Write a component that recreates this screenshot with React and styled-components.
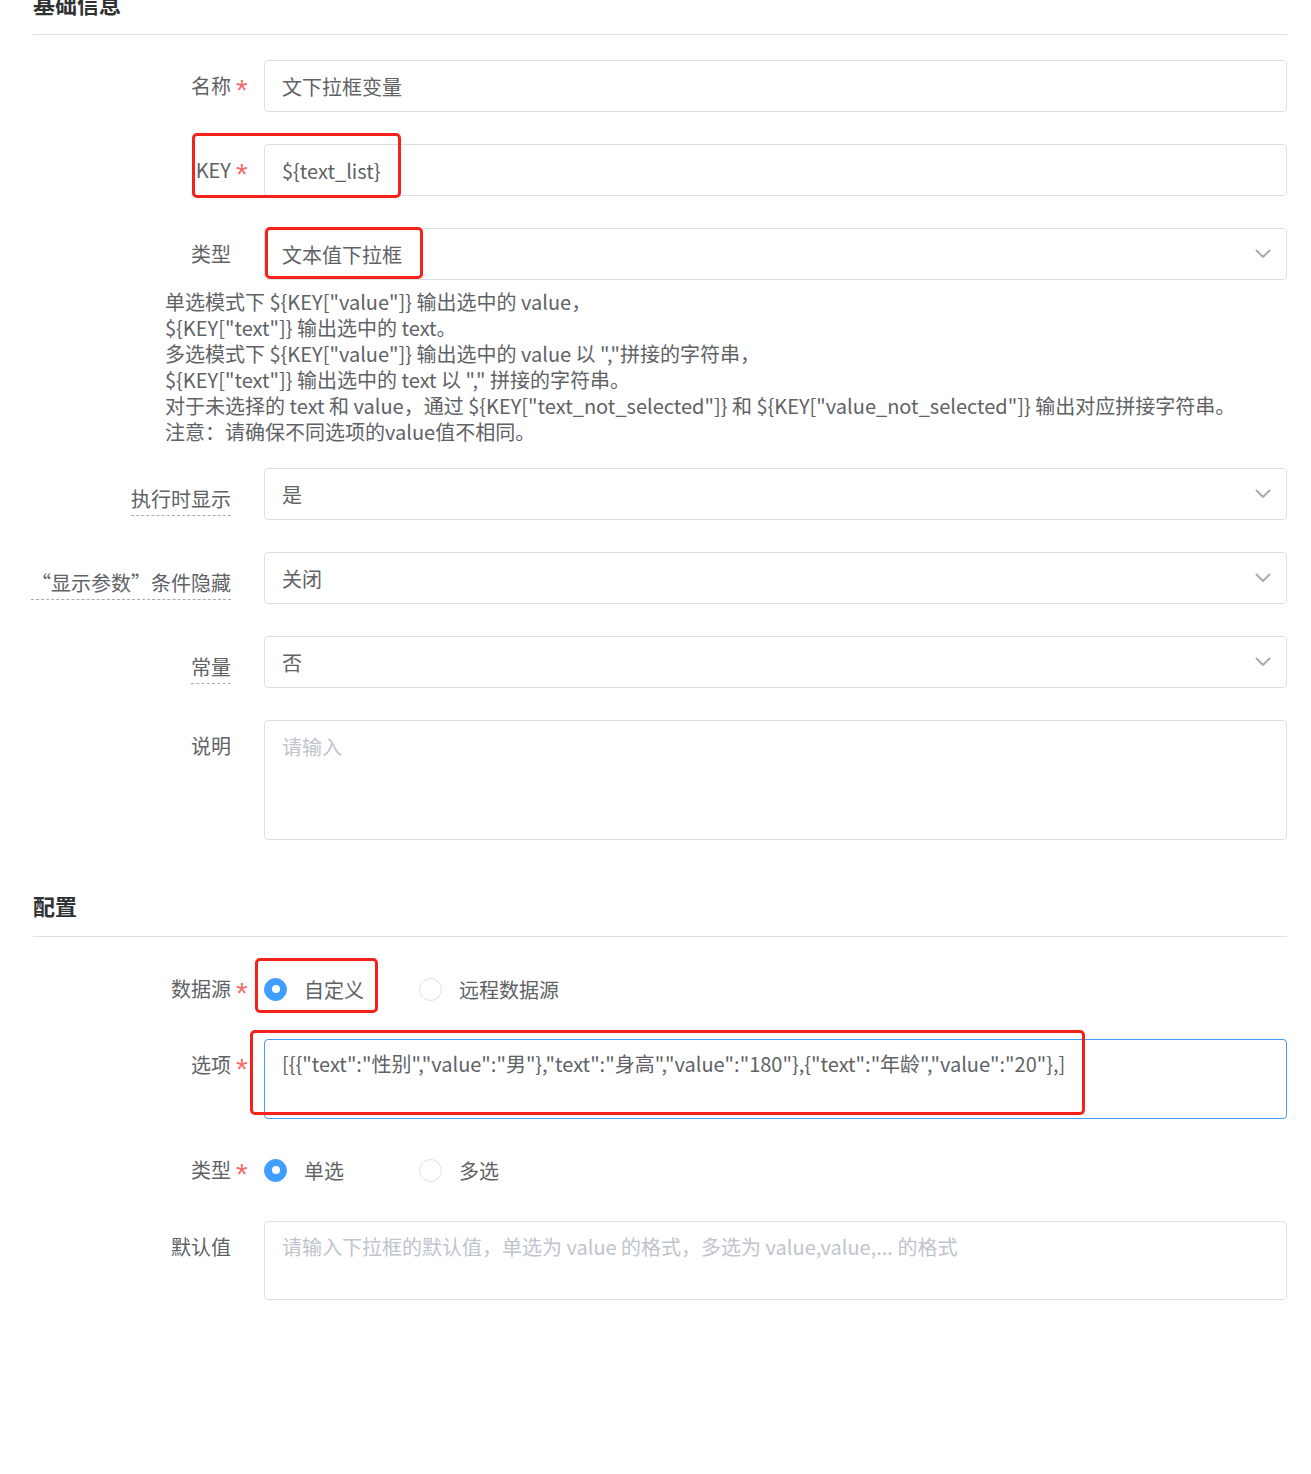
import React from "react";
import styled, { createGlobalStyle } from "styled-components";

const GlobalStyle = createGlobalStyle`
  html, body { margin: 0; padding: 0; background: #fff; }
  body {
    font-family: "Noto Sans CJK SC", "Noto Sans", "Liberation Sans", sans-serif;
    color: #606266;
  }
  * { box-sizing: border-box; }
`;

const Page = styled.div`
  margin-top: -12px;
  padding: 0 24px 0 33px;
  width: 1311px;
`;

const Section = styled.section`
  display: flow-root;
  margin-top: ${(p) => p.$top || 0}px;
`;

const SectionTitle = styled.h3`
  margin: 0;
  font-size: 22px;
  font-weight: 700;
  line-height: 30px;
  color: #303133;
  padding-bottom: 16px;
  border-bottom: 1px solid #dcdfe6;
`;

const SectionBody = styled.div`
  display: flow-root;
  padding-top: ${(p) => p.$pt || 25}px;
`;

const FormItem = styled.div`
  position: relative;
  display: flex;
  align-items: flex-start;
  margin-bottom: ${(p) => (p.$mb === undefined ? 32 : p.$mb)}px;
`;

const Label = styled.div`
  position: relative;
  flex: 0 0 231px;
  width: 231px;
  height: 52px;
  padding-right: 33px;
  display: flex;
  justify-content: flex-end;
  align-items: ${(p) => (p.$dashed ? "flex-start" : "center")};
  font-size: 20px;
  line-height: 26px;
  color: #606266;
  white-space: nowrap;

  ${(p) =>
    p.$required &&
    `
    &::after {
      content: "*";
      position: absolute;
      left: calc(100% - 28px);
      top: 50%;
      margin-top: -11px;
      color: #f56c6c;
      font-family: "Liberation Sans", sans-serif;
      font-size: 30px;
      line-height: 30px;
    }
  `}
`;

const DashedText = styled.span`
  margin-top: 18px;
  padding-bottom: 3px;
  border-bottom: 1px dashed #a8abb2;
  line-height: 26px;
`;

const Input = styled.div`
  flex: 1;
  height: 52px;
  border: 1px solid #dcdfe6;
  border-radius: 4px;
  padding: 0 17px;
  display: flex;
  align-items: center;
  justify-content: space-between;
  font-size: 20px;
  color: #606266;
  background: #fff;
  white-space: nowrap;
`;

const Chevron = styled.svg`
  flex-shrink: 0;
  margin-right: -2px;
`;

const TextArea = styled.div`
  flex: 1;
  height: ${(p) => p.$h}px;
  border: 1px solid ${(p) => (p.$focus ? "#409eff" : "#dcdfe6")};
  border-radius: 4px;
  padding: ${(p) => p.$pt}px 17px 0;
  font-size: 20px;
  line-height: 26px;
  color: ${(p) => (p.$placeholder ? "#c0c4cc" : "#606266")};
  background: #fff;
  white-space: nowrap;
`;

const Help = styled.div`
  margin: 9px 0 23px 132px;
  font-size: 20px;
  line-height: 26px;
  color: #606266;
  white-space: nowrap;
`;

const RadioGroup = styled.div`
  display: flex;
  align-items: center;
  height: 52px;
`;

const RadioItem = styled.label`
  width: 155px;
  display: flex;
  align-items: center;
  gap: 17px;
  font-size: 20px;
  color: #606266;
`;

const RadioDot = styled.span`
  width: 23px;
  height: 23px;
  border-radius: 50%;
  flex-shrink: 0;
  position: relative;
  background: ${(p) => (p.$checked ? "#409eff" : "#fff")};
  border: 1px solid ${(p) => (p.$checked ? "#409eff" : "#dcdfe6")};

  ${(p) =>
    p.$checked &&
    `
    &::after {
      content: "";
      position: absolute;
      left: 50%;
      top: 50%;
      width: 8px;
      height: 8px;
      border-radius: 50%;
      background: #fff;
      transform: translate(-50%, -50%);
    }
  `}
`;

const Mark = styled.div`
  position: absolute;
  left: ${(p) => p.$x}px;
  top: ${(p) => p.$y}px;
  width: ${(p) => p.$w}px;
  height: ${(p) => p.$h}px;
  border: 3px solid #f5221b;
  border-radius: 5px;
  pointer-events: none;
`;

const ChevronDown = () => (
  <Chevron width="16" height="10" viewBox="0 0 16 10" fill="none">
    <polyline
      points="1.5,1.5 8,8 14.5,1.5"
      stroke="#a8abb2"
      strokeWidth="2"
      strokeLinecap="round"
      strokeLinejoin="round"
    />
  </Chevron>
);

const Select = ({ children }) => (
  <Input>
    <span>{children}</span>
    <ChevronDown />
  </Input>
);

const Radio = ({ checked, children }) => (
  <RadioItem>
    <RadioDot $checked={checked} />
    <span>{children}</span>
  </RadioItem>
);

export default function App() {
  return (
    <>
      <GlobalStyle />
      <Page>
        <Section>
          <SectionTitle>基础信息</SectionTitle>
          <SectionBody $pt={25}>
            <FormItem>
              <Label $required>名称</Label>
              <Input>文下拉框变量</Input>
            </FormItem>
            <FormItem>
              <Label $required>KEY</Label>
              <Input>{"${text_list}"}</Input>
              <Mark $x={159} $y={-11} $w={209} $h={65} />
            </FormItem>
            <FormItem $mb={0}>
              <Label>类型</Label>
              <Select>文本值下拉框</Select>
              <Mark $x={232} $y={-1} $w={158} $h={52} />
            </FormItem>
            <Help>
              <div>{'单选模式下 ${KEY["value"]} 输出选中的 value，'}</div>
              <div>{'${KEY["text"]} 输出选中的 text。'}</div>
              <div>{'多选模式下 ${KEY["value"]} 输出选中的 value 以 ","拼接的字符串，'}</div>
              <div>{'${KEY["text"]} 输出选中的 text 以 "," 拼接的字符串。'}</div>
              <div>
                {'对于未选择的 text 和 value，通过 ${KEY["text_not_selected"]} 和 ${KEY["value_not_selected"]} 输出对应拼接字符串。'}
              </div>
              <div>注意：请确保不同选项的value值不相同。</div>
            </Help>
            <FormItem>
              <Label $dashed>
                <DashedText>执行时显示</DashedText>
              </Label>
              <Select>是</Select>
            </FormItem>
            <FormItem>
              <Label $dashed>
                <DashedText>“显示参数”条件隐藏</DashedText>
              </Label>
              <Select>关闭</Select>
            </FormItem>
            <FormItem>
              <Label $dashed>
                <DashedText>常量</DashedText>
              </Label>
              <Select>否</Select>
            </FormItem>
            <FormItem>
              <Label>说明</Label>
              <TextArea $h={120} $pt={13} $placeholder>
                请输入
              </TextArea>
            </FormItem>
          </SectionBody>
        </Section>

        <Section $top={18}>
          <SectionTitle>配置</SectionTitle>
          <SectionBody $pt={26}>
            <FormItem $mb={24}>
              <Label $required>数据源</Label>
              <RadioGroup>
                <Radio checked>自定义</Radio>
                <Radio>远程数据源</Radio>
              </RadioGroup>
              <Mark $x={222} $y={-5} $w={123} $h={55} />
            </FormItem>
            <FormItem $mb={25}>
              <Label $required>选项</Label>
              <TextArea $h={80} $pt={11} $focus>
                {'[{{"text":"性别","value":"男"},"text":"身高","value":"180"},{"text":"年龄","value":"20"},]'}
              </TextArea>
              <Mark $x={217} $y={-9} $w={835} $h={85} />
            </FormItem>
            <FormItem $mb={25}>
              <Label $required>类型</Label>
              <RadioGroup>
                <Radio checked>单选</Radio>
                <Radio>多选</Radio>
              </RadioGroup>
            </FormItem>
            <FormItem $mb={0}>
              <Label>默认值</Label>
              <TextArea $h={79} $pt={12} $placeholder>
                请输入下拉框的默认值，单选为 value 的格式，多选为 value,value,... 的格式
              </TextArea>
            </FormItem>
          </SectionBody>
        </Section>
      </Page>
    </>
  );
}
